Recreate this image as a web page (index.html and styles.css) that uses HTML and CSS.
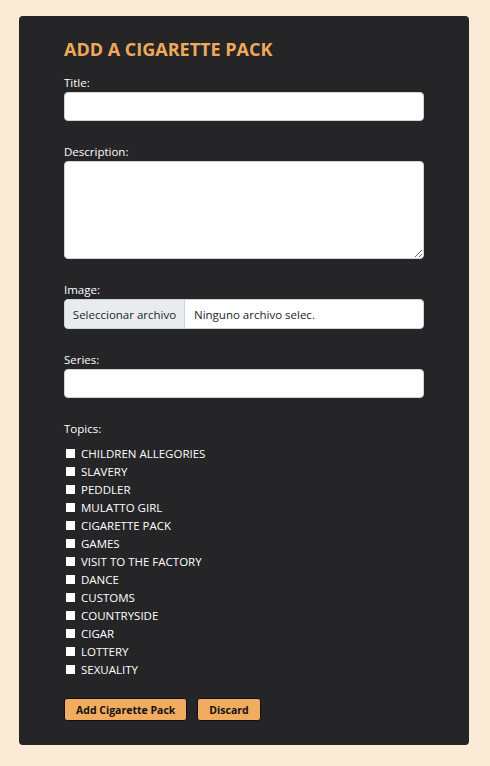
FILE: index.html
```html
<!DOCTYPE html>
<html lang="en">
<head>
<meta charset="utf-8">
<title>Add a Cigarette Pack</title>
<link rel="stylesheet" href="styles.css">
</head>
<body>
<main class="card">
  <h1 class="title">ADD A CIGARETTE PACK</h1>
  <form class="form">
    <div class="group">
      <label class="label" for="title">Title:</label>
      <input class="field" id="title" type="text">
    </div>
    <div class="group">
      <label class="label" for="desc">Description:</label>
      <textarea class="field area" id="desc"></textarea>
    </div>
    <div class="group">
      <span class="label">Image:</span>
      <label class="file">
        <span class="file-btn">Seleccionar archivo</span>
        <span class="file-name">Ninguno archivo selec.</span>
        <input class="file-input" type="file">
      </label>
    </div>
    <div class="group">
      <label class="label" for="series">Series:</label>
      <input class="field" id="series" type="text">
    </div>
    <div class="group">
      <span class="label topics-label">Topics:</span>
      <ul class="topics">
        <li><label class="check"><input type="checkbox"><span>CHILDREN ALLEGORIES</span></label></li>
        <li><label class="check"><input type="checkbox"><span>SLAVERY</span></label></li>
        <li><label class="check"><input type="checkbox"><span>PEDDLER</span></label></li>
        <li><label class="check"><input type="checkbox"><span>MULATTO GIRL</span></label></li>
        <li><label class="check"><input type="checkbox"><span>CIGARETTE PACK</span></label></li>
        <li><label class="check"><input type="checkbox"><span>GAMES</span></label></li>
        <li><label class="check"><input type="checkbox"><span>VISIT TO THE FACTORY</span></label></li>
        <li><label class="check"><input type="checkbox"><span>DANCE</span></label></li>
        <li><label class="check"><input type="checkbox"><span>CUSTOMS</span></label></li>
        <li><label class="check"><input type="checkbox"><span>COUNTRYSIDE</span></label></li>
        <li><label class="check"><input type="checkbox"><span>CIGAR</span></label></li>
        <li><label class="check"><input type="checkbox"><span>LOTTERY</span></label></li>
        <li><label class="check"><input type="checkbox"><span>SEXUALITY</span></label></li>
      </ul>
    </div>
    <div class="actions">
      <button class="btn" type="submit">Add Cigarette Pack</button>
      <button class="btn" type="button">Discard</button>
    </div>
  </form>
</main>
</body>
</html>
```
FILE: styles.css
```css
* { box-sizing: border-box; }
html, body { margin: 0; padding: 0; }
body {
  background: #faebd7;
  font-family: "Open Sans", "Noto Sans", sans-serif;
  color: #ffffff;
  padding: 16px 21px 21px 19px;
}
.card {
  width: 450px;
  background: #252527;
  border-radius: 4px;
  padding: 20px 45px 24px 45px;
}
.title {
  margin: 0 0 13px 0;
  font-size: 18px;
  line-height: 26px;
  font-weight: 700;
  color: #efa95b;
}
.form { display: flex; flex-direction: column; }
.group { display: flex; flex-direction: column; margin-bottom: 23px; }
.label {
  font-size: 11.5px;
  line-height: 16px;
  margin-bottom: 1px;
}
.field {
  width: 360px;
  height: 29px;
  border: 1px solid #ced4da;
  border-radius: 4px;
  background: #fff;
  font: inherit;
  padding: 4px 8px;
}
.area { height: 98px; resize: vertical; }
.file {
  display: flex;
  width: 360px;
  height: 30px;
  border: 1px solid #ced4da;
  border-radius: 4px;
  background: #fff;
  overflow: hidden;
  color: #212529;
  font-size: 11.5px;
  align-items: stretch;
  white-space: nowrap;
}
.file-btn {
  display: flex;
  align-items: center;
  background: #e9ecef;
  border-right: 1px solid #ced4da;
  width: 120px;
  flex: none;
  justify-content: center;
}
.file-name { display: flex; align-items: center; padding-left: 9px; }
.file-input { display: none; }
.topics-label { margin-bottom: 7px; }
.topics { list-style: none; margin: 0; padding: 0; }
.topics li { height: 18px; }
.check {
  display: flex;
  align-items: center;
  height: 18px;
  font-size: 11.5px;
}
.check input {
  appearance: none;
  -webkit-appearance: none;
  width: 9px;
  height: 9px;
  margin: 0 6px 0 2px;
  background: #fff;
  border: none;
  border-radius: 0;
}
.actions { display: flex; gap: 10px; margin-top: -3px; }
.btn {
  height: 23px;
  background: #f1ac5f;
  border: 1px solid #111;
  border-radius: 3px;
  font-family: inherit;
  font-size: 10.5px;
  font-weight: 700;
  color: #111;
  padding: 0 11px;
}
```
